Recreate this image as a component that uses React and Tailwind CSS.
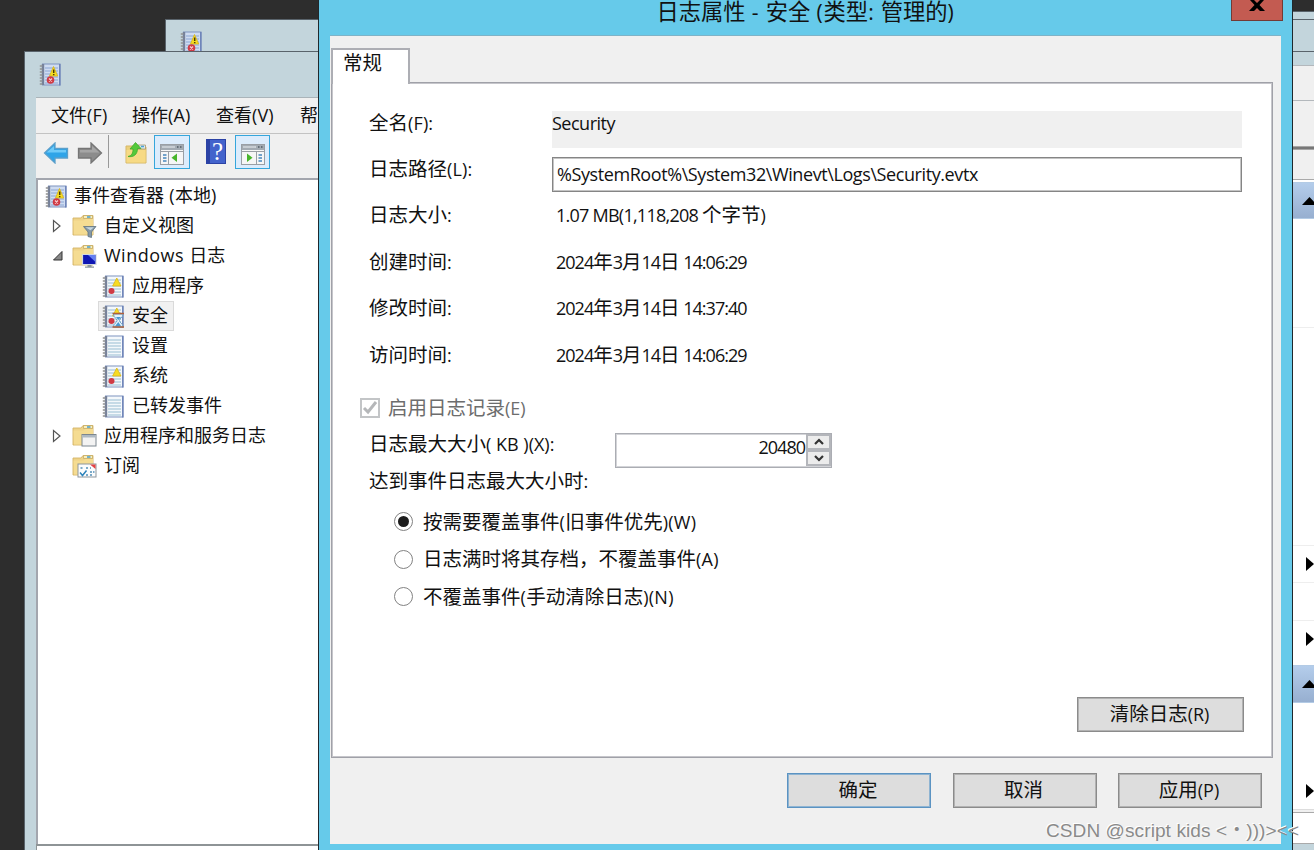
import React from 'react';

const LATIN = /([\x20-\x7e]+)/;

/**
 * Mixed text: latin runs get their own size and spacing, digits are set tighter
 */
function Label({ children, latin = 'text-[18px] tracking-[0.15px]', className = '' }) {
  return (
    <span className={`whitespace-pre ${className}`}>
      {children.split(LATIN).map((part, i) => (
        LATIN.test(part) ? <span key={i} className={latin}>{part}</span> : part
      ))}
    </span>
  );
}

const DIGITS = 'text-[18px] tracking-[-1px]';

function BookIcon({ variant = 'plain', className = '' }) {
  const lit = variant === 'viewer';
  return (
    <svg viewBox="0 0 22 23" className={`h-[23px] w-[22px] shrink-0 ${className}`}>
      <rect x="3.500" y="1" width="17.500" height="21" fill={lit ? '#cfdcf1' : '#f4f8fb'} stroke="#7e93c0" strokeWidth="1" />
      <path d="M20.8 1v21.500" stroke="#6a80b6" strokeWidth="1.4" />
      <path d="M6 5h13M6 8h13M6 11h13M6 14h13M6 17h13M6 20h13" stroke={lit ? '#8ba6d3' : '#98bdd2'} strokeWidth="1" />
      <rect x="2.8" y="1" width="2.4" height="21" fill="#76819a" />
      <path d="M.8 3h2.500M.8 6h2.500M.8 9h2.500M.8 12h2.500M.8 15h2.500M.8 18h2.500M.8 21h2.500" stroke="#929292" strokeWidth="1.3" />
      {variant !== 'plain' && (
        <>
          <path d={lit ? 'M14.5 3.500l4.200 9.500H10.500z' : 'M14.8 3l4.2 8h-8.4z'} fill="#f6dc22" stroke="#d9b51b" strokeWidth=".8" />
          {lit && <path d="M14.7 6.500v3.500M14.7 11v1.3" stroke="#4a3c05" strokeWidth="1.5" />}
          <circle cx={lit ? 11.5 : 9.5} cy={lit ? 17 : 16} r={lit ? 3.8 : 3} fill="#d03a44" />
          {lit && <path d="M10 15.500l3 3M13 15.500l-3 3" stroke="#f7c9cc" strokeWidth="1.2" />}
        </>
      )}
      {variant === 'busy' && (
        <>
          <path d="M11.500 9h9.500c0 4-3.500 4-3.500 6.500s3.500 2.500 3.500 6.500h-9.500c0-4 3.500-4 3.500-6.500s-3.500-2.500-3.500-6.500z" fill="#e4f2fa" stroke="#6ba0c4" />
          <path d="M14 12h5l-2.700 3zM16.300 17l3 4.500h-6.500z" fill="#4899d3" />
          <path d="M10.500 8.500h11.500M10.500 22h11.500" stroke="#b0603a" strokeWidth="1.6" />
        </>
      )}
    </svg>
  );
}

function FolderIcon({ badge }) {
  return (
    <svg viewBox="0 0 25 24" className="h-6 w-[25px] shrink-0">
      <path d="M1 4h8l2-2.500h10V21H1z" fill="#eed389" stroke="#d5b467" strokeWidth=".9" />
      <path d="M11.500 1.500h9v3h-9z" fill="#fbeebb" stroke="#c5ac66" strokeWidth=".8" />
      <path d="M15 3h3.500" stroke="#55a2cb" strokeWidth="1.6" />
      <path d="M1.500 6.500h10l2-1.500H21v15.500H2z" fill="#f5dc92" />
      {badge === 'filter' && (
        <>
          <path d="M11.500 12.500h12.500L19.500 18v5.500l-3.500-1V18z" fill="#8598a6" stroke="#5f7382" strokeWidth=".8" />
          <path d="M13.500 13.200h8.500l-3.500 3z" fill="#c5d6df" />
        </>
      )}
      {badge === 'screen' && (
        <>
          <path d="M10.500 10.500H24v10H10.500z" fill="#1017b4" stroke="#d3d9df" strokeWidth="1.2" />
          <path d="M16 11h7.500v7z" fill="#657ff0" />
          <path d="M15.500 21h4v1.500h2.500v1.200h-9v-1.200h2.500z" fill="#8c969c" />
        </>
      )}
      {badge === 'window' && (
        <>
          <rect x="10" y="10.500" width="14" height="11.500" fill="#f3f3f3" stroke="#7c8790" />
          <path d="M10.500 11h13v2.500h-13z" fill="#aeb9c2" />
        </>
      )}
      {badge === 'calendar' && (
        <>
          <rect x="6" y="10" width="18" height="13" fill="#fbfcfd" stroke="#8d959b" />
          <path d="M18 10.500h5.500V15z" fill="#e54343" />
          <path d="M14 14h2M18 14h1M8.500 14h2M18 18h2M21 18h1.500M14 21h2M18 21h2" stroke="#538fb7" strokeWidth="1.5" />
          <path d="M8 18.500l2.500 3 4-5" fill="none" stroke="#2d83bb" strokeWidth="1.5" />
        </>
      )}
    </svg>
  );
}

function ArrowIcon({ back }) {
  return (
    <svg viewBox="0 0 26 22" className={`h-[22px] w-[26px] shrink-0 ${back ? '' : '-scale-x-100'}`}>
      <path
        d="M1.500 11L12 1v5.500h12.500v9.500H12V21z"
        fill={back ? '#2ea4e8' : '#8c8c8c'}
        stroke={back ? '#5b9fca' : '#757575'}
        strokeWidth="1.3"
      />
      <path d="M3.500 10.500L11 4v4h12v2.500z" fill={back ? '#6fcaf8' : '#a5a5a5'} />
    </svg>
  );
}

function PaneIcon({ side }) {
  return (
    <svg viewBox="0 0 24 21" className="h-[21px] w-6">
      <rect x=".5" y=".5" width="23" height="20" fill="#f6f6f6" stroke="#9a9fa5" />
      <path d="M1 1h22v5H1z" fill="#a3abb3" />
      <path d="M2 3h13" stroke="#dce1e5" strokeWidth="1.3" />
      <path d="M17 3h1.500M20 3h1.500" stroke="#505b66" strokeWidth="1.5" />
      <path d="M1 7.500h22" stroke="#9a9fa5" />
      {side === 'left' ? (
        <>
          <path d="M8.500 8v12" stroke="#9a9fa5" />
          <path d="M3 11h3.500M3 14h3.500M3 17h3.500" stroke="#4787bd" strokeWidth="1.4" />
          <path d="M17 9.500v8.500L11.500 13.700z" fill="#48b52c" />
        </>
      ) : (
        <>
          <path d="M15.500 8v12" stroke="#9a9fa5" />
          <path d="M17.500 11H21M17.500 14H21M17.500 17H21" stroke="#4787bd" strokeWidth="1.4" />
          <path d="M6 9.500v8.500l5.500-4.300z" fill="#48b52c" />
        </>
      )}
    </svg>
  );
}

function Toolbar() {
  return (
    <div className="flex h-[45px] items-start border-t border-[#c3c3c3] bg-[#f0f0f0] pt-px pl-[7px]">
      <div className="mt-[7px]"><ArrowIcon back /></div>
      <div className="mt-[7px] ml-2"><ArrowIcon /></div>
      <div className="ml-[5px] h-[33px] w-px bg-[#999]" />
      <svg viewBox="0 0 22 22" className="mt-[7px] ml-4 h-[22px] w-[22px]">
        <path d="M1 4h7l2 1h11v16H1z" fill="#ecd07b" stroke="#d6b768" />
        <path d="M13 3h7.500v4H13z" fill="#dceaf0" stroke="#a9976b" strokeWidth=".8" />
        <path d="M16 4.500h3" stroke="#4ca3d6" strokeWidth="1.5" />
        <path d="M1.500 8h19v12.500h-19z" fill="#f7da85" />
        <path d="M3 14.500c4-1 5-3.500 5-7.500H5L10.500.5 16 6.500h-3.500c0 6-4 9-9.500 8z" fill="#55c93a" stroke="#3fa92c" strokeWidth=".8" />
      </svg>
      <div className="ml-[7px] flex h-[34px] w-9 items-center justify-center border-[1.500px] border-[#35a6dc] bg-[#dcecfc] pt-1">
        <PaneIcon side="left" />
      </div>
      <div className="mt-1 ml-4 flex h-[25px] w-5 items-center justify-center border border-l-4 border-[#2b42a5] bg-[#4363cc] font-['Liberation_Serif',serif] text-[25px] text-white">
        ?
      </div>
      <div className="ml-[9px] flex h-[34px] w-[35px] items-center justify-center border-[1.500px] border-[#35a6dc] bg-[#dcecfc] pt-1">
        <PaneIcon side="right" />
      </div>
    </div>
  );
}

function TreeRow({ icon, text, level = 0, expander, selected }) {
  const indent = ['pl-1.5', 'pl-[33px]', 'pl-[60px]'][level];
  return (
    <div className={`relative flex h-[30px] items-center ${indent}`}>
      {expander && (
        <svg viewBox="0 0 12 14" className="absolute top-2 left-[14px] h-[14px] w-3">
          {expander === 'open'
            ? <path d="M10 2.500V11H1.500z" fill="#888" stroke="#333" />
            : <path d="M1.500 1.500v11l6.500-5.500z" fill="#fff" stroke="#555" strokeWidth="1.2" />}
        </svg>
      )}
      <div
        className={`flex h-[30px] items-center border ${level === 2 ? 'gap-2 pr-[5px] pl-[3px]' : level === 1 ? 'gap-[7px]' : 'gap-[7px]'} ${
          selected ? 'border-[#dadada] bg-[#f1f1f1]' : 'border-transparent'
        }`}
      >
        {icon}
        <Label className="relative -top-px" latin="text-[18px] tracking-[0.5px]">{text}</Label>
      </div>
    </div>
  );
}

const TREE = [
  { text: '事件查看器 (本地)', icon: <BookIcon variant="viewer" /> },
  { text: '自定义视图', level: 1, expander: 'closed', icon: <FolderIcon badge="filter" /> },
  { text: 'Windows 日志', level: 1, expander: 'open', icon: <FolderIcon badge="screen" /> },
  { text: '应用程序', level: 2, icon: <BookIcon variant="events" /> },
  { text: '安全', level: 2, selected: true, icon: <BookIcon variant="busy" /> },
  { text: '设置', level: 2, icon: <BookIcon /> },
  { text: '系统', level: 2, icon: <BookIcon variant="events" /> },
  { text: '已转发事件', level: 2, icon: <BookIcon /> },
  { text: '应用程序和服务日志', level: 1, expander: 'closed', icon: <FolderIcon badge="window" /> },
  { text: '订阅', level: 1, icon: <FolderIcon badge="calendar" /> },
];

function ViewerWindow() {
  return (
    <div className="absolute top-[51px] left-6 flex h-[799px] w-[1290px] flex-col border-t border-l border-[#59636b] bg-[#c3d5dc] pl-[11px]">
      <div className="h-[45px] pt-[11px] pl-[3px]">
        <BookIcon variant="viewer" />
      </div>
      <div className="flex h-9 items-center border-t border-[#aab4b9] bg-[#f0f0f0] pb-0.5 pl-[15px]">
        <Label className="w-[81px]">文件(F)</Label>
        <Label className="w-[84px]">操作(A)</Label>
        <Label className="w-[84px]">查看(V)</Label>
        <Label>帮助(H)</Label>
      </div>
      <Toolbar />
      <div className="h-[666px] border-t-2 border-l-2 border-[#a3a6ae] bg-white pt-px">
        {TREE.map((row) => <TreeRow key={row.text} {...row} />)}
      </div>
      <div className="flex-1 border-t-2 border-l border-[#8e9496] bg-white" />
    </div>
  );
}

function PaneArrow({ up }) {
  return (
    <svg viewBox="0 0 18 16" className="h-4 w-[18px] shrink-0">
      {up ? <path d="M1 12L8.500 4 16 12z" /> : <path d="M5 1v14l8-7z" />}
    </svg>
  );
}

/**
 * Actions pane of the rear window, seen right of the dialog
 */
function ActionsEdge() {
  const header = 'flex items-center border-y border-[#b3cbe5] bg-linear-to-b from-[#b4cdeb] to-[#97afd0] pl-2';
  return (
    <div className="absolute top-[51px] left-[1293px] flex h-[799px] w-[21px] flex-col overflow-hidden border-t border-[#59636b] bg-[#c3d5dc]">
      <div className="h-[13px]" />
      <div className="h-9 border-y border-[#b3b8bc] bg-[#f0f0f0]" />
      <div className="h-[45px] bg-[#f0f0f0]" />
      <div className="h-1 border-y border-[#a5a5a5] bg-[#777]" />
      <div className="h-[30px] border-b border-[#aaa] bg-[#f0f0f0]" />
      <div className="h-0.5 bg-white" />
      <div className={`h-[37px] ${header}`}><PaneArrow up /></div>
      <div className="h-[109px] border-b border-[#eee] bg-white" />
      <div className="h-[218px] border-b border-[#eee] bg-white" />
      <div className="flex h-[37px] items-center border-b border-[#eee] bg-white pl-2"><PaneArrow /></div>
      <div className="h-[38px] border-b border-[#eee] bg-white" />
      <div className="flex h-11 bg-white pt-2.5 pl-2"><PaneArrow /></div>
      <div className={`h-[38px] ${header}`}><PaneArrow up /></div>
      <div className="flex h-[107px] items-end border-b border-[#ddd] bg-white pb-2.5 pl-2"><PaneArrow /></div>
      <div className="h-[3px] border-b border-[#aaa] bg-[#f0f0f0]" />
      <div className="h-[31px] border-b border-[#aaa] bg-white" />
    </div>
  );
}

function Button({ children, primary, className = '' }) {
  return (
    <button
      type="button"
      className={`flex h-[35px] items-center justify-center border bg-[#ddd] ${
        primary ? 'border-[#5b93c2] shadow-[inset_0_0_0_1px_#8fb4d2]' : 'border-[#8b8b8b] shadow-[inset_0_0_0_1px_#b2b2b2]'
      } ${className}`}
    >
      <Label className="relative -top-px -left-px" latin="text-[18px]">{children}</Label>
    </button>
  );
}

function Radio({ checked, children }) {
  return (
    <label className="flex h-[37.500px] items-center">
      <span className="mr-2.5 flex h-[19px] w-[19px] items-center justify-center rounded-full border-[1.500px] border-[#828282] bg-white">
        {checked && <span className="h-[11px] w-[11px] rounded-full bg-[#1c1c1c]" />}
      </span>
      <Label latin="text-[18px] tracking-[0.3px]">{children}</Label>
    </label>
  );
}

const DETAILS = [
  ['日志大小:', '1.07 MB(1,118,208 个字节)'],
  ['创建时间:', '2024年3月14日 14:06:29'],
  ['修改时间:', '2024年3月14日 14:37:40'],
  ['访问时间:', '2024年3月14日 14:06:29'],
];

function GeneralTab() {
  return (
    <div className="-mt-0.5 flex h-[676px] flex-col border border-[#a0a1a8] bg-white pl-[37px] shadow-[inset_0_0_0_1px_#c6c6cb]">
      <div className="mt-[28px] flex">
        <Label className="-mt-px h-[47px] w-[183px]">全名(F):</Label>
        <div className="h-[37px] w-[690px] bg-[#f0f0f0]">
          <Label className="relative -top-px" latin="text-[18px] tracking-[-0.5px]">Security</Label>
        </div>
      </div>
      <div className="flex h-[46px]">
        <Label className="-mt-px w-[183px]">日志路径(L):</Label>
        <div className="flex h-[35px] w-[690px] items-center border border-[#858585] pb-px pl-1 shadow-[inset_0_0_0_1px_#c4c4c4]">
          <Label latin="text-[18px] tracking-[-0.41px]">{'%SystemRoot%\\System32\\Winevt\\Logs\\Security.evtx'}</Label>
        </div>
      </div>
      {DETAILS.map(([name, value]) => (
        <div key={name} className="-mt-px mb-px flex h-[46.500px]">
          <Label className="w-[187px]">{name}</Label>
          <Label latin={value.includes('MB') ? 'text-[18px] tracking-[-0.75px]' : DIGITS}>{value}</Label>
        </div>
      ))}
      <label className="mt-[5px] -ml-[9px] flex h-7 items-center text-[#6d6d6d]">
        <span className="mr-2 flex h-5 w-5 items-center justify-center border-2 border-[#c3c5c7]">
          <svg viewBox="0 0 16 16" className="h-4 w-4"><path d="M2 8l4 4 8-10" fill="none" stroke="#b5b7b9" strokeWidth="3" /></svg>
        </span>
        <Label latin="text-[18px]">启用日志记录(E)</Label>
      </label>
      <div className="mt-[11px] flex h-[37px]">
        <Label className="-mt-0.5 w-[246px]" latin="text-[18px]">日志最大大小( KB )(X):</Label>
        <div className="flex h-[35px] w-[217px] justify-end border border-[#abadb3] shadow-[inset_0_0_0_1px_#d3d4d8]">
          <Label latin="text-[18px] tracking-[-1px]" className="pr-px">20480</Label>
          <div className="flex h-8 w-[25px] flex-col">
            {['M3 8l4-4 4 4', 'M3 4l4 4 4-4'].map((d) => (
              <span key={d} className="flex h-4 items-center justify-center border-2 border-[#b4b6bb] bg-[#ececec]">
                <svg viewBox="0 0 14 12" className="h-3 w-3.5"><path d={d} fill="none" stroke="#333" strokeWidth="2.200" /></svg>
              </span>
            ))}
          </div>
        </div>
      </div>
      <Label className="-mt-0.5">达到事件日志最大大小时:</Label>
      <div className="mt-[9px] pl-[25px]">
        <Radio checked>按需要覆盖事件(旧事件优先)(W)</Radio>
        <Radio>日志满时将其存档，不覆盖事件(A)</Radio>
        <Radio>不覆盖事件(手动清除日志)(N)</Radio>
      </div>
      <div className="mt-auto mr-7 mb-[25px] flex justify-end">
        <Button className="w-[167px]">清除日志(R)</Button>
      </div>
    </div>
  );
}

function PropertiesDialog() {
  return (
    <div className="absolute top-0 left-[318px] h-[850px] w-[975px] border-x border-[#20282c] bg-[#66caea] px-[11px] text-[19.500px] leading-[26px]">
      <div className="flex h-[35px] justify-center">
        <Label className="-mt-px text-[22.300px]" latin="text-[21px] tracking-[0.8px]">日志属性 - 安全 (类型: 管理的)</Label>
        <div className="absolute top-0 right-[9px] flex h-[21px] w-[52px] justify-center border border-t-0 border-[#733a35] bg-[#c35b51]">
          <svg viewBox="0 0 16 12" className="h-3 w-4"><path d="M0 11h5l3-3 3 3h5L10.500 5 15 0H11L8 3 5 0H1l4.500 5z" /></svg>
        </div>
      </div>
      <div className="h-[809px] border-t border-[#7fb3c7] bg-[#f0f0f0] pt-3 pr-2 pl-px">
        <div className="relative flex h-[36px] w-[79px] border-2 border-b-0 border-[#adaeb4] bg-white pl-2.5">
          <Label>常规</Label>
        </div>
        <GeneralTab />
        <div className="mt-[15px] mr-[11px] flex justify-end gap-[21.500px]">
          <Button primary className="w-[144px]">确定</Button>
          <Button className="w-[144px]">取消</Button>
          <Button className="w-[144px]">应用(P)</Button>
        </div>
      </div>
    </div>
  );
}

export default function App() {
  return (
    <div className="relative h-[850px] w-[1314px] overflow-hidden bg-[#2d2d2d] font-['Open_Sans','Noto_Sans_CJK_SC',sans-serif] text-[18px] leading-[26px] text-[#111]">
      <div className="absolute top-[11px] left-[700px] h-[40px] w-[614px] border-t border-[#59636b] bg-[#c3d5dc]" />
      <div className="absolute top-[19px] left-[165px] h-[40px] w-[1149px] border-t border-l border-[#59636b] bg-[#c3d5dc] pt-[11px] pl-[14px]">
        <BookIcon variant="viewer" />
      </div>
      <ViewerWindow />
      <ActionsEdge />
      <PropertiesDialog />
      <div className="absolute top-[819px] left-[1046px] font-['Liberation_Sans','Noto_Sans_CJK_SC',sans-serif] text-[19px] leading-6 tracking-[0.1px] whitespace-pre text-[#8a8a8a] [text-shadow:-1px_-1px_0_#fff]">
        CSDN @script kids &lt;・)))&gt;&lt;&lt;
      </div>
    </div>
  );
}
